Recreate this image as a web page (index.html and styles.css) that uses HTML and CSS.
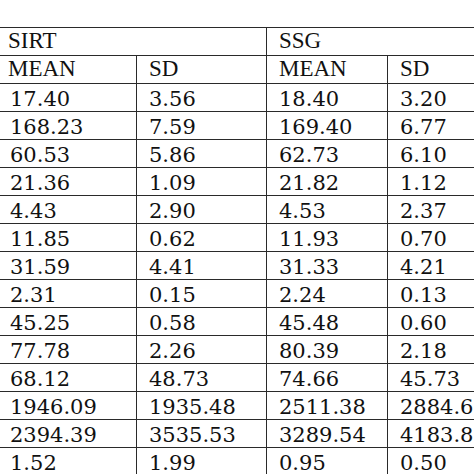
FILE: index.html
```html
<!DOCTYPE html>
<html>
<head>
<meta charset="utf-8">
<link rel="stylesheet" href="styles.css">
</head>
<body>
<div class="stats">
  <div class="cell head span first">SIRT</div><div class="cell head span">SSG</div>
  <div class="cell head first">MEAN</div><div class="cell head">SD</div><div class="cell head">MEAN</div><div class="cell head">SD</div>
  <div class="cell first">17.40</div><div class="cell">3.56</div><div class="cell">18.40</div><div class="cell">3.20</div>
  <div class="cell first">168.23</div><div class="cell">7.59</div><div class="cell">169.40</div><div class="cell">6.77</div>
  <div class="cell first">60.53</div><div class="cell">5.86</div><div class="cell">62.73</div><div class="cell">6.10</div>
  <div class="cell first">21.36</div><div class="cell">1.09</div><div class="cell">21.82</div><div class="cell">1.12</div>
  <div class="cell first">4.43</div><div class="cell">2.90</div><div class="cell">4.53</div><div class="cell">2.37</div>
  <div class="cell first">11.85</div><div class="cell">0.62</div><div class="cell">11.93</div><div class="cell">0.70</div>
  <div class="cell first">31.59</div><div class="cell">4.41</div><div class="cell">31.33</div><div class="cell">4.21</div>
  <div class="cell first">2.31</div><div class="cell">0.15</div><div class="cell">2.24</div><div class="cell">0.13</div>
  <div class="cell first">45.25</div><div class="cell">0.58</div><div class="cell">45.48</div><div class="cell">0.60</div>
  <div class="cell first">77.78</div><div class="cell">2.26</div><div class="cell">80.39</div><div class="cell">2.18</div>
  <div class="cell first">68.12</div><div class="cell">48.73</div><div class="cell">74.66</div><div class="cell">45.73</div>
  <div class="cell first">1946.09</div><div class="cell">1935.48</div><div class="cell">2511.38</div><div class="cell">2884.68</div>
  <div class="cell first">2394.39</div><div class="cell">3535.53</div><div class="cell">3289.54</div><div class="cell">4183.83</div>
  <div class="cell first">1.52</div><div class="cell">1.99</div><div class="cell">0.95</div><div class="cell">0.50</div>
</div>
</body>
</html>
```
FILE: styles.css
```css
html, body {
  margin: 0;
  padding: 0;
  background: #fff;
  overflow: hidden;
}
.stats {
  margin-top: 27px;
  width: 520px;
  display: grid;
  grid-template-columns: 136px 130px 121px 133px;
  grid-auto-rows: 28px;
  border-top: 1px solid #2a2a2a;
  color: #111;
}
.cell {
  box-sizing: border-box;
  border-bottom: 1px solid #2a2a2a;
  border-left: 1px solid #2a2a2a;
  padding: 3px 0 0 12px;
  font-family: "DejaVu Serif", serif;
  font-size: 21px;
  line-height: 24px;
  white-space: nowrap;
  overflow: hidden;
}
.cell.first {
  border-left: none;
  padding-left: 10px;
}
.cell.span {
  grid-column: span 2;
}
.cell.head {
  font-family: "Liberation Serif", serif;
  font-size: 23px;
  line-height: 26px;
  padding-top: 0;
}
.cell.head.first {
  padding-left: 8px;
}
```
